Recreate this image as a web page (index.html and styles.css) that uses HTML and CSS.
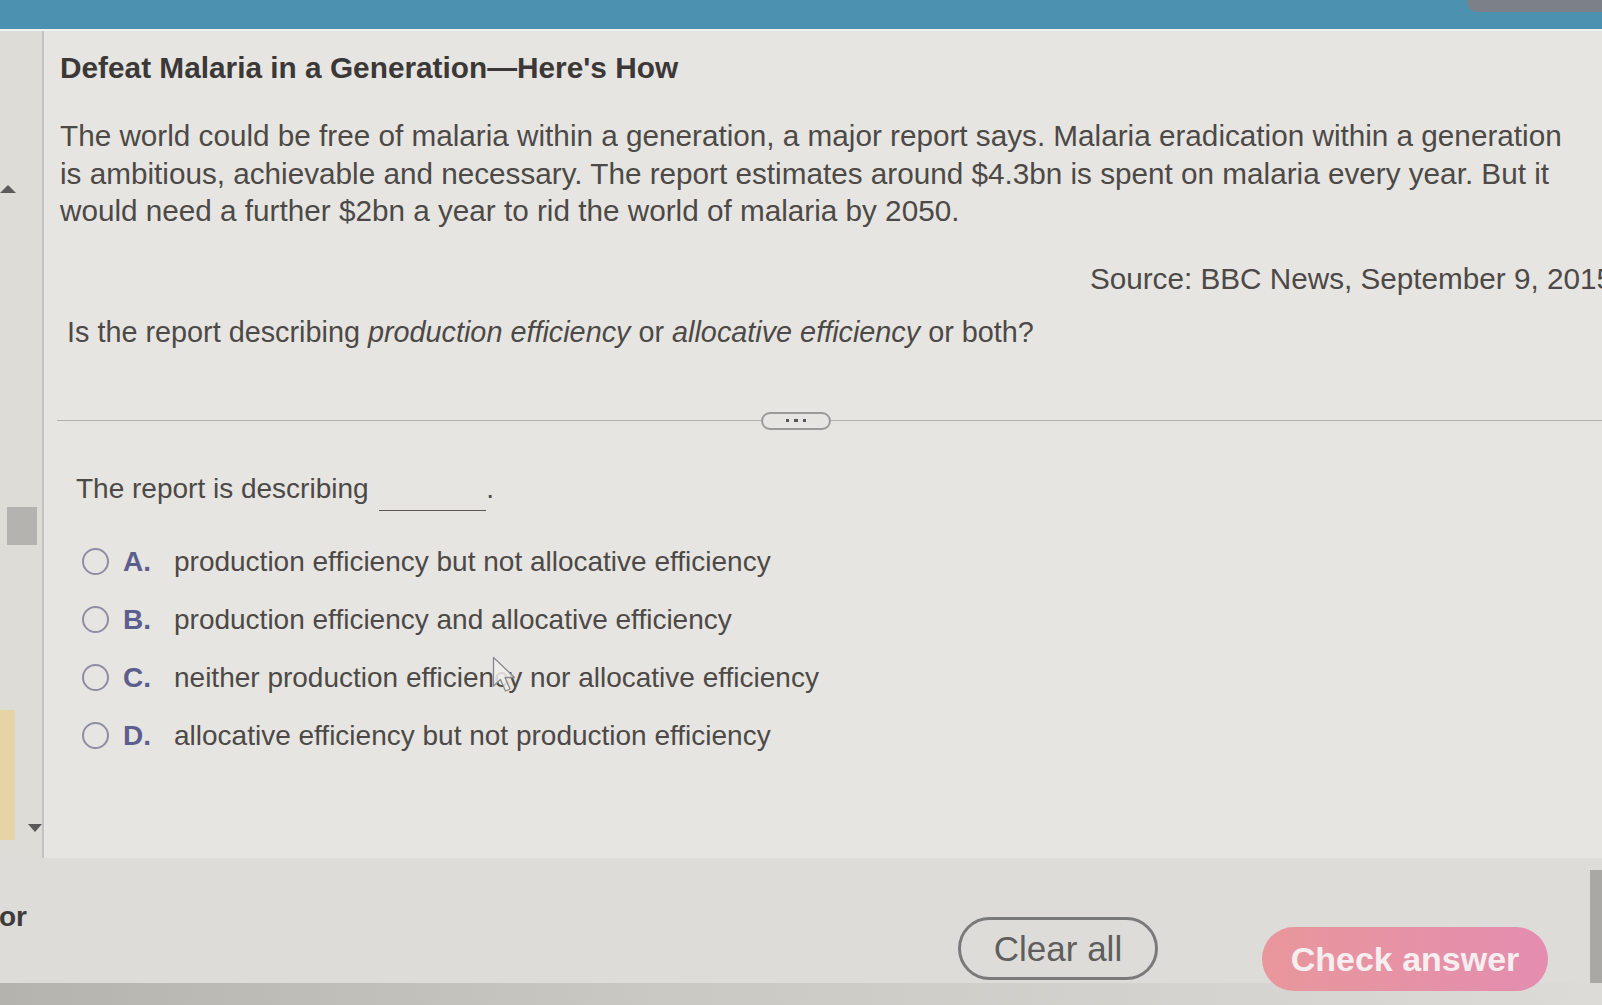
FILE: index.html
```html
<!DOCTYPE html>
<html lang="en">
<head>
<meta charset="utf-8">
<title>Defeat Malaria in a Generation</title>
<link rel="stylesheet" href="styles.css">
</head>
<body>
<header class="topbar"><div class="tab"></div></header>
<div class="workspace">
  <aside class="sidebar">
    <span class="arrow-up"></span>
    <div class="thumb"></div>
    <div class="sidebar-foot">
      <div class="flag"></div>
      <span class="arrow-down"></span>
    </div>
  </aside>
  <main class="content">
    <h1 class="title">Defeat Malaria in a Generation—Here's How</h1>
    <p class="article">The world could be free of malaria within a generation, a major report says. Malaria eradication within a generation is ambitious, achievable and necessary. The report estimates around $4.3bn is spent on malaria every year. But it would need a further $2bn a year to rid the world of malaria by 2050.</p>
    <p class="source">Source: BBC News, September 9, 2015</p>
    <p class="question">Is the report describing <em>production efficiency</em> or <em>allocative efficiency</em> or both?</p>
    <div class="divider"><span class="more"><i></i><i></i><i></i></span></div>
    <p class="prompt">The report is describing <span class="blank"></span>.</p>
    <ul class="options">
      <li class="option"><span class="radio"></span><span class="letter">A.</span><span class="label">production efficiency but not allocative efficiency</span></li>
      <li class="option"><span class="radio"></span><span class="letter">B.</span><span class="label">production efficiency and allocative efficiency</span></li>
      <li class="option"><span class="radio"></span><span class="letter">C.</span><span class="label">neither production efficiency nor allocative efficiency</span></li>
      <li class="option"><span class="radio"></span><span class="letter">D.</span><span class="label">allocative efficiency but not production efficiency</span></li>
      <svg class="cursor" width="26" height="40" viewBox="0 0 26 40" aria-hidden="true">
        <path d="M1.5 1.5 L1.5 30 L8.5 23.5 L13.5 35 L18 33 L13 21.5 L22.5 21.5 Z" fill="#f1f0ec" fill-opacity="0.85" stroke="#8a8a8a" stroke-width="1.3" stroke-linejoin="round"/>
      </svg>
    </ul>
  </main>
</div>
<footer class="footer">
  <span class="or">or</span>
  <div class="actions">
    <button class="btn-clear" type="button">Clear all</button>
    <button class="btn-check" type="button">Check answer</button>
  </div>
  <div class="edge"></div>
</footer>
<div class="bottom-strip"></div>
</body>
</html>
```

FILE: styles.css
```css
html, body {
  margin: 0;
  padding: 0;
}
body {
  width: 1602px;
  height: 1005px;
  overflow: hidden;
  background: #e6e5e1;
  font-family: "Liberation Sans", Arial, sans-serif;
  color: #4c4947;
}

/* top bar */
.topbar {
  height: 29px;
  background: #4c92b0;
  border-bottom: 2px solid #f1f1ef;
  display: flex;
  justify-content: flex-end;
}
.tab {
  width: 135px;
  height: 12px;
  background: #7c8087;
  border-bottom-left-radius: 10px;
}

/* main area */
.workspace {
  display: flex;
  height: 827px;
}
.sidebar {
  width: 44px;
  flex: none;
  background: #dedcd7;
  border-right: 2px solid #c3c2bd;
  display: flex;
  flex-direction: column;
  padding-bottom: 18px;
  box-sizing: border-box;
}
.arrow-up {
  margin-top: 154px;
  width: 0;
  height: 0;
  border-left: 8px solid transparent;
  border-right: 8px solid transparent;
  border-bottom: 8px solid #5b5a58;
}
.thumb {
  margin-top: 314px;
  margin-left: 7px;
  width: 30px;
  height: 38px;
  background: #b4b3af;
}
.sidebar-foot {
  margin-top: auto;
  display: flex;
  align-items: flex-end;
}
.flag {
  width: 15px;
  height: 130px;
  background: #e7d4a6;
}
.arrow-down {
  margin-left: 13px;
  margin-bottom: 8px;
  width: 0;
  height: 0;
  border-left: 7px solid transparent;
  border-right: 7px solid transparent;
  border-top: 8px solid #5b5a58;
}

.content {
  flex: 1;
  min-width: 0;
  padding-left: 16px;
  overflow: hidden;
}
.title {
  margin: 20px 0 0;
  font-size: 29.8px;
  line-height: 34px;
  font-weight: bold;
  color: #3b3837;
}
.article {
  margin: 32px 0 0;
  width: 1515px;
  font-size: 29.7px;
  line-height: 37.5px;
}
.source {
  margin: 30px -11px 0 0;
  text-align: right;
  white-space: nowrap;
  font-size: 29.7px;
  line-height: 37px;
}
.question {
  margin: 17px 0 0;
  padding-left: 7px;
  font-size: 28.8px;
  line-height: 37px;
}
.question em {
  font-style: italic;
}

.divider {
  margin: 61px 0 0 -3px;
  height: 18px;
  display: flex;
  align-items: center;
}
.divider::before,
.divider::after {
  content: "";
  height: 1.5px;
  background: #b3b2ae;
}
.divider::before {
  width: 704px;
}
.divider::after {
  flex: 1;
}
.more {
  width: 66px;
  height: 14px;
  border: 2px solid #9a9a98;
  border-radius: 10px;
  display: flex;
  align-items: center;
  justify-content: center;
  gap: 5px;
}
.more i {
  width: 3.5px;
  height: 3.5px;
  background: #555;
}

.prompt {
  margin: 40px 0 0;
  padding-left: 16px;
  font-size: 28px;
  line-height: 37px;
}
.blank {
  display: inline-block;
  width: 107px;
  margin-left: 3px;
  border-bottom: 1.5px solid #5a5754;
  vertical-align: -13px;
}

.options {
  position: relative;
  list-style: none;
  margin: 22px 0 0;
  padding: 0;
}
.option {
  height: 58px;
  display: flex;
  align-items: center;
  font-size: 28px;
}
.radio {
  margin-left: 22px;
  width: 23px;
  height: 23px;
  border: 2.5px solid #8e8da4;
  border-radius: 50%;
  flex: none;
}
.letter {
  margin-left: 14px;
  width: 51px;
  font-weight: bold;
  color: #5c5e8d;
}
.label {
  color: #4c4947;
}
.cursor {
  position: absolute;
  left: 432px;
  top: 123px;
}

/* footer */
.footer {
  height: 125px;
  background: #dedcd8;
  display: flex;
  align-items: flex-start;
}
.or {
  margin: 42px 0 0 -1px;
  font-size: 28px;
  line-height: 34px;
  font-weight: bold;
  color: #3e3c3b;
}
.actions {
  margin: 59px 0 0 auto;
  display: flex;
  align-items: flex-start;
  gap: 104px;
}
.btn-clear {
  width: 200px;
  height: 63px;
  border: 3px solid #7a7a7a;
  border-radius: 32px;
  background: transparent;
  font-family: "Liberation Sans", Arial, sans-serif;
  font-size: 35px;
  color: #5e5e5e;
  padding: 0;
}
.btn-check {
  margin-top: 10px;
  width: 286px;
  height: 64px;
  border: none;
  border-radius: 32px;
  background: linear-gradient(90deg, #e8979b, #e48db0);
  font-family: "Liberation Sans", Arial, sans-serif;
  font-size: 34px;
  font-weight: bold;
  color: #f7eef0;
  padding: 0;
}
.edge {
  margin-left: 42px;
  width: 12px;
  align-self: stretch;
  margin-top: 12px;
  background: #a9a8a4;
}
.bottom-strip {
  height: 22px;
  background: linear-gradient(90deg, #b4b3ae, #c9c8c3 40%, #dcdbd7);
}
```
